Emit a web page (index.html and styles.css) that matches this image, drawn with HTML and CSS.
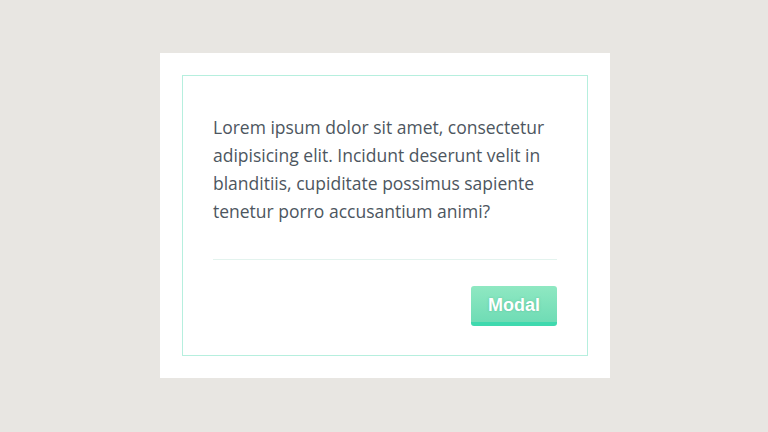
FILE: index.html
```html
<!DOCTYPE html>
<html>
<head>
  <title>Modal</title>
  <link rel="stylesheet" href="styles.css">
</head>
<body>
  <div class="card">
    <div class="card-inner">
      <p class="card-text">Lorem ipsum dolor sit amet, consectetur adipisicing elit. Incidunt deserunt velit in blanditiis, cupiditate possimus sapiente tenetur porro accusantium animi?</p>
      <hr class="divider">
      <div class="actions">
        <button class="btn">Modal</button>
      </div>
    </div>
  </div>
</body>
</html>
```

FILE: styles.css
```css
html,
body {
  margin: 0;
  height: 100%;
}

body {
  background-color: #e8e6e2;
  font-family: "Open Sans", sans-serif;
  display: flex;
  justify-content: center;
  align-items: flex-start;
  padding-left: 2px;
  box-sizing: border-box;
}

.card {
  width: 450px;
  margin-top: 53px;
  padding: 22px;
  box-sizing: border-box;
  background-color: #fff;
}

/* inner frame, thin pale teal */
.card-inner {
  border: 1px solid #b6efde;
  padding: 37px 30px 29px;
}

.card-text {
  margin: 0;
  font-size: 17.5px;
  line-height: 28px;
  color: #4d5660;
}

.divider {
  border: none;
  border-top: 1px solid #e3f3ee;
  margin: 34px 0 26px;
}

.actions {
  display: flex;
  justify-content: flex-end;
}

.btn {
  width: 86px;
  height: 40px;
  border: none;
  border-bottom: 4px solid #3fd9ae;
  border-radius: 3px;
  background: linear-gradient(#8fe8c2, #6fdcb5);
  color: #fff;
  font-family: "Liberation Sans", Arial, sans-serif;
  font-weight: bold;
  font-size: 18px;
  text-shadow: 0 0 2px rgba(60, 160, 120, 0.5);
  cursor: pointer;
  padding: 3px 0 0;
}
```
